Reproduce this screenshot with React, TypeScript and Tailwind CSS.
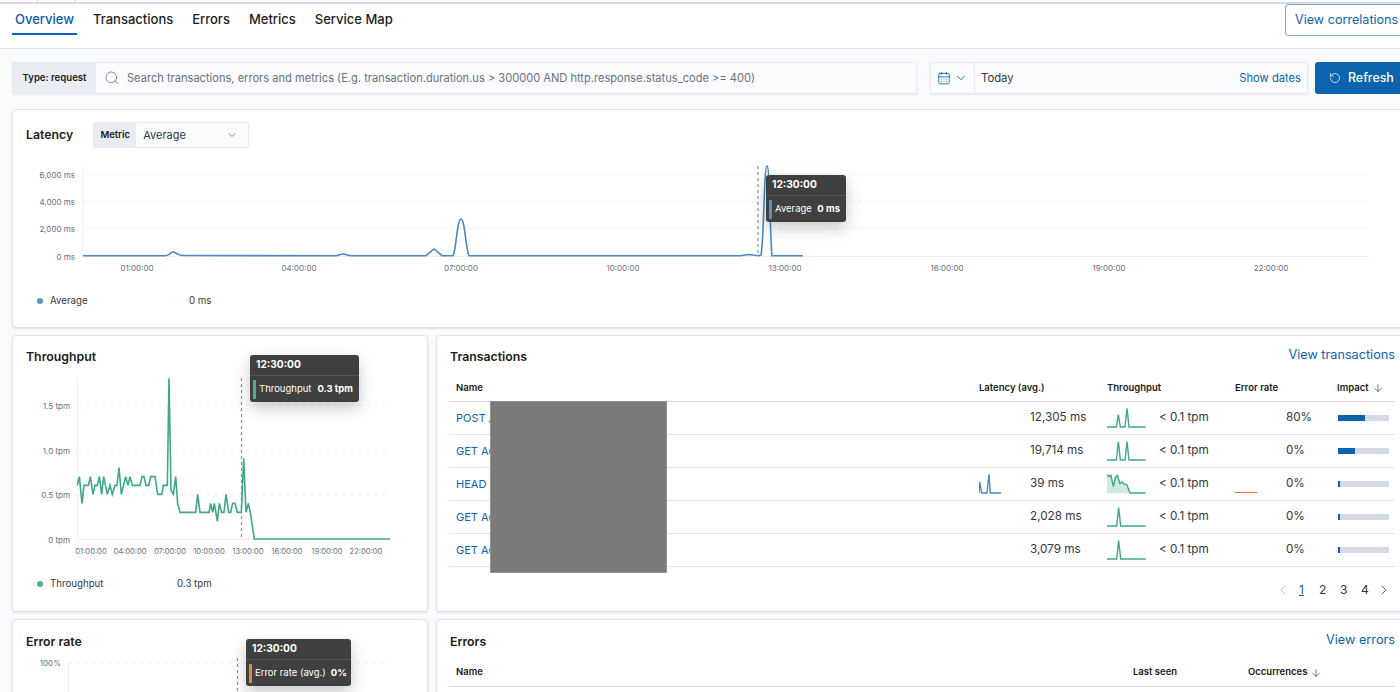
import React from "react";
import { Search, CalendarDays, ChevronDown, RotateCw, ArrowDown, ChevronLeft, ChevronRight } from "lucide-react";

const pts = (a: number[][], ox = 0, oy = 0) => a.map(([x, y]) => `${ox + x / 3},${oy + y / 3}`).join(" ");

const throughput = [[232,436],[238,410],[246,490],[252,436],[265,436],[271,410],[279,463],[285,436],[292,436],[298,410],[305,463],[311,410],[322,463],[330,436],[337,463],[345,436],[351,436],[357,383],[364,463],[377,410],[384,436],[390,410],[397,436],[420,436],[426,410],[432,410],[438,436],[446,436],[452,410],[465,410],[473,463],[485,463],[490,436],[502,436],[507,115],[513,450],[520,463],[527,410],[533,490],[540,517],[587,517],[593,463],[600,517],[627,517],[632,490],[638,517],[643,490],[652,544],[658,490],[665,517],[672,517],[678,463],[686,517],[692,517],[698,490],[705,490],[712,517],[724,517],[731,355],[738,517],[745,490],[751,517],[763,597],[1170,597]];

const latency = "M83 255.7 L165 255.7 C170 255.7 170 252 173 252 C176 252 177 255 182 255.5 L335 255.7 C339 255.5 340 254 343 254 C346 254 347 255.5 352 255.7 L426 255.7 L434 249 L442 255.7 L453 255.7 C456 252 457 219 461 219 C465 219 466 252 469 255.7 L740 255.7 L749 254.5 L758 255.7 L761 255 C764 240 764 165.7 767 165.7 C770 165.7 770 240 772 255.7 L803 255.7";

const Tooltip = ({ time, label, value, color, className }: { time: string; label: string; value: string; color: string; className: string }) => (
  <div className={`absolute z-10 h-[47px] rounded-[3px] bg-[#404040] text-white whitespace-nowrap shadow-[0_6px_16px_rgba(0,0,0,0.22)] ${className}`}>
    <div className="h-[21px] px-[6px] flex items-center text-[10.2px] font-bold border-b border-[#555]">{time}</div>
    <div className="flex items-center h-[26px] pl-[3px] pr-[6px] text-[9.5px]">
      <span className={`w-[3px] h-[19px] mr-[3px] shrink-0 ${color}`} />
      <span className="flex-1">{label}</span>
      <span className="font-bold ml-[5px]">{value}</span>
    </div>
  </div>
);

const Spark = ({ w = 39, color = "#3fa88a", d, area }: { w?: number; color?: string; d: string; area?: boolean }) => (
  <svg width={w} height={20} viewBox={`0 0 ${w * 3} 60`} className="shrink-0">
    {area && <path d={`${d} L${w * 3} 58 L0 58 Z`} fill="#cfe8e0" stroke="none" />}
    <path d={d} fill="none" stroke={color} strokeWidth={4.2} />
  </svg>
);

const rows = [
  { name: "POST /", latency: "12,305 ms", rate: "80%", impact: 27, d: "M0 57 L28 57 L34 20 L40 57 L54 57 L60 1 L66 57 L116 57" },
  { name: "GET Ad", latency: "19,714 ms", rate: "0%", impact: 17, d: "M0 57 L28 57 L34 2 L40 57 L54 57 L60 2 L66 57 L116 57" },
  { name: "HEAD /", latency: "39 ms", rate: "0%", impact: 2, d: "M0 2 L6 7 L12 4 L19 38 L25 11 L31 4 L39 29 L46 24 L52 31 L59 31 L69 57 L116 57", area: true, spark: true },
  { name: "GET Ad", latency: "2,028 ms", rate: "0%", impact: 2, d: "M0 57 L29 57 L35 2 L41 57 L116 57" },
  { name: "GET Ad", latency: "3,079 ms", rate: "0%", impact: 2, d: "M0 57 L29 57 L35 2 L41 57 L116 57" },
];

const Card = ({ className, children }: { className: string; children: React.ReactNode }) => (
  <section className={`relative bg-white border border-[#dde3ee] rounded-[4px] shadow-[0_1px_2px_rgba(152,162,179,0.3)] ${className}`}>{children}</section>
);

const H = ({ children }: { children: React.ReactNode }) => <h2 className="text-[12.3px] font-semibold text-[#1a1c21] leading-[16px]">{children}</h2>;

export default function App() {
  const font = { fontFamily: "Inter, sans-serif" };
  return (
    <div style={font} className="relative w-[1400px] h-[692px] overflow-hidden bg-[#fafbfd] text-[#343741] text-[12px]">
      <div className="w-[1420px]">
        <div className="h-[2px] bg-white flex">
          <span className="ml-[37px] w-px bg-[#d3dae6]" />
          <span className="ml-[37px] w-px bg-[#d3dae6]" />
        </div>
        <div className="h-[2px] bg-[#d3dae6]" />
        <nav className="h-[45px] bg-white border-b border-[#dfe5ef] flex justify-between pr-[12px]">
          <div className="flex pl-[12px] gap-[13px] text-[13px] font-medium text-[#1a1c21]">
            <a className="h-[31px] px-[3px] pt-[2px] flex items-center text-[#0b5cad] border-b-2 border-[#0b64b4]">Overview</a>
            <a className="h-[31px] px-[3px] flex items-center">Transactions</a>
            <a className="h-[31px] px-[3px] flex items-center">Errors</a>
            <a className="h-[31px] px-[3px] flex items-center">Metrics</a>
            <a className="h-[31px] px-[3px] flex items-center">Service Map</a>
          </div>
          <button className="w-[123px] h-[32px] border border-[#7fa8cc] rounded-[3px] text-left pl-[9px] text-[12.6px] text-[#0b64ad]">View correlations</button>
        </nav>

        <div className="flex px-[12px] pt-[13px] pb-[14px] h-[60px]">
          <div className="flex w-[905px] h-[32px] bg-[#fbfcfd] border border-[#e6eaf1] rounded-[2px] shadow-[0_1px_2px_rgba(152,162,179,0.2)]">
            <span className="w-[83px] bg-[#e9edf3] flex items-center justify-center text-[9.6px] font-semibold text-[#1a1c21]">Type: request</span>
            <Search size={16} strokeWidth={1.2} className="ml-[8px] mr-[7px] self-center text-[#69707d]" />
            <span className="self-center text-[11.1px] text-[#69707d]">Search transactions, errors and metrics (E.g. transaction.duration.us &gt; 300000 AND http.response.status_code &gt;= 400)</span>
          </div>
          <div className="ml-[13px] flex w-[378px] h-[32px] bg-[#fbfcfd] border border-[#e6eaf1] rounded-[2px] items-center shadow-[0_1px_2px_rgba(152,162,179,0.2)]">
            <span className="w-[44px] h-full flex items-center justify-center gap-[3px] border-r border-[#e6eaf1] text-[#0b64ad]">
              <CalendarDays size={14} strokeWidth={1.4} />
              <ChevronDown size={14} strokeWidth={1.5} />
            </span>
            <span className="ml-[6px] flex-1 text-[11.3px] text-[#343741]">Today</span>
            <span className="mr-[6px] text-[11.2px] text-[#0b64ad]">Show dates</span>
          </div>
          <button className="ml-[7px] w-[93px] h-[32px] bg-[#0b64ad] rounded-[3px] text-white flex items-center pl-[14px] text-[12.4px] font-medium">
            <RotateCw size={12} strokeWidth={1.5} className="mr-[7px] -scale-x-100" />
            Refresh
          </button>
        </div>

        <div className="px-[12px]">
          <Card className="h-[219px] px-[13px] pt-[12px]">
            <div className="flex items-center h-[26px]">
              <H>Latency</H>
              <div className="ml-[20px] flex h-[26px] w-[156px] border border-[#e6eaf1] rounded-[2px] bg-[#fbfcfd]">
                <span className="w-[42px] bg-[#e9edf3] flex items-center justify-center text-[9.5px] font-semibold text-[#1a1c21]">Metric</span>
                <span className="flex-1 flex items-center pl-[7px] text-[11px]">Average</span>
                <ChevronDown size={12} strokeWidth={1.2} className="self-center mr-[10px]" />
              </div>
            </div>
            <svg width={1380} height={135} viewBox="26 150 1380 135" className="block font-['Inter'] mt-[2px]">
              {[174, 201.5, 228.5].map((y) => <line key={y} x1={83} x2={1370} y1={y} y2={y} stroke="#eef0f4" strokeDasharray="4 4" />)}
              <line x1={83} x2={1370} y1={256.5} y2={256.5} stroke="#eef0f4" />
              <line x1={83} x2={83} y1={165} y2={257} stroke="#eef0f4" />
              {[["6,000 ms", 174], ["4,000 ms", 201.5], ["2,000 ms", 228.5], ["0 ms", 256]].map(([t, y]) => (
                <text key={t} x={75} y={Number(y) + 3.5} textAnchor="end" fontSize={8} fill="#69707d">{t}</text>
              ))}
              {[["01:00:00", 137], ["04:00:00", 299], ["07:00:00", 461], ["10:00:00", 623], ["13:00:00", 785], ["16:00:00", 947], ["19:00:00", 1109], ["22:00:00", 1271]].map(([t, x]) => (
                <text key={t} x={x} y={271} textAnchor="middle" fontSize={8} fill="#69707d">{t}</text>
              ))}
              <line x1={758} x2={758} y1={166} y2={256} stroke="#8d939e" strokeWidth={1.2} strokeDasharray="3 3" />
              <path d={latency} fill="none" stroke="#4a88bf" strokeWidth={1.6} />
            </svg>
            <div className="flex items-center text-[9.7px] mt-[9px]">
              <span className="w-[6px] h-[6px] ml-[11px] rounded-full bg-[#5a93c5]" />
              <span className="ml-[7px] w-[139px]">Average</span>
              <span>0 ms</span>
            </div>
            <Tooltip time="12:30:00" label="Average" value="0 ms" color="bg-[#5a8fc0]" className="left-[753px] top-[65px] w-[80px]" />
          </Card>

          <div className="grid grid-cols-[416px_1fr] gap-[8px] mt-[7px]">
            <div className="flex flex-col gap-[7px]">
              <Card className="h-[277px] px-[13px] pt-[13px]">
                <H>Throughput</H>
                <svg width={400} height={190} viewBox="26 373 400 190" className="block font-['Inter'] mt-[8px]">
                  {[405, 450, 494].map((y) => <line key={y} x1={78} x2={388} y1={y} y2={y} stroke="#eef0f4" strokeDasharray="4 4" />)}
                  <line x1={78} x2={388} y1={539.5} y2={539.5} stroke="#eef0f4" />
                  <line x1={77.5} x2={77.5} y1={378} y2={539} stroke="#eef0f4" />
                  {[["1.5 tpm", 405], ["1.0 tpm", 450], ["0.5 tpm", 494], ["0 tpm", 539]].map(([t, y]) => (
                    <text key={t} x={70} y={Number(y) + 3.5} textAnchor="end" fontSize={8} fill="#69707d">{t}</text>
                  ))}
                  {[["01:00:00", 91], ["04:00:00", 130], ["07:00:00", 170], ["10:00:00", 209], ["13:00:00", 248], ["16:00:00", 287], ["19:00:00", 327], ["22:00:00", 366]].map(([t, x]) => (
                    <text key={t} x={x} y={554} textAnchor="middle" fontSize={7.6} fill="#69707d">{t}</text>
                  ))}
                  <line x1={241.5} x2={241.5} y1={378} y2={539} stroke="#8d939e" strokeWidth={1.2} strokeDasharray="3 3" />
                  <polyline points={pts(throughput, 0, 340)} fill="none" stroke="#3fa88a" strokeWidth={1.6} />
                </svg>
                <div className="flex items-center text-[9.7px] mt-[14px]">
                  <span className="w-[6px] h-[6px] ml-[11px] rounded-full bg-[#4bb090]" />
                  <span className="ml-[7px] w-[127px]">Throughput</span>
                  <span>0.3 tpm</span>
                </div>
                <Tooltip time="12:30:00" label="Throughput" value="0.3 tpm" color="bg-[#4bb090]" className="left-[237px] top-[19px] w-[109px]" />
              </Card>
              <Card className="h-[120px] px-[13px] pt-[14px]">
                <H>Error rate</H>
                <svg width={400} height={40} viewBox="26 655 400 40" className="block font-['Inter'] mt-[5px]">
                  <line x1={68} x2={390} y1={663} y2={663} stroke="#eef0f4" strokeDasharray="4 4" />
                  <line x1={68.5} x2={68.5} y1={663} y2={695} stroke="#eef0f4" />
                  <text x={61} y={666} textAnchor="end" fontSize={8} fill="#69707d">100%</text>
                  <line x1={237.5} x2={237.5} y1={658} y2={695} stroke="#8d939e" strokeWidth={1.2} strokeDasharray="3 3" />
                </svg>
                <Tooltip time="12:30:00" label="Error rate (avg.)" value="0%" color="bg-[#e08b3d]" className="left-[233px] top-[19px] w-[105px]" />
              </Card>
            </div>

            <div className="flex flex-col gap-[7px]">
              <Card className="h-[277px] pl-[12px] pt-[13px]">
                <div className="flex justify-between w-[946px] pl-[1px]">
                  <H>Transactions</H>
                  <a className="text-[12.7px] leading-[11px] text-[#0b64ad]">View transactions</a>
                </div>
                <div className="w-[946px] mt-[9px]">
                  <div className="flex items-center h-[28px] pt-[1px] text-[9.5px] font-semibold text-[#1a1c21] border-b border-[#d3dae6]">
                    <span className="w-[530px] pl-[7px]">Name</span>
                    <span className="w-[128px]">Latency (avg.)</span>
                    <span className="w-[128px]">Throughput</span>
                    <span className="w-[102px]">Error rate</span>
                    <span className="flex items-center">Impact<ArrowDown size={12} strokeWidth={1.2} className="ml-[3px]" /></span>
                  </div>
                  {rows.map((r, i) => (
                    <div key={i} className="flex items-center h-[33px] text-[11.7px] border-b border-[#dfe5ef]">
                      <a className="w-[530px] pl-[7px] pt-[1px] text-[11px] text-[#0b64ad]">{r.name}</a>
                      <span className="w-[128px] flex items-center">
                        <span className="w-[51px] h-[20px]">
                          {r.spark && <Spark w={22} color="#4a88bf" d="M0 57 L2 24 L8 57 L24 57 L30 2 L34 57 L66 57" />}
                        </span>
                        {r.latency}
                      </span>
                      <span className="w-[128px] flex items-center">
                        <Spark d={r.d} area={r.area} />
                        <span className="ml-[13px]">&lt; 0.1 tpm</span>
                      </span>
                      <span className="w-[102px] flex items-center">
                        <span className="w-[51px] h-[20px] flex items-end">
                          {r.spark && <span className="w-[22px] h-px mb-[1px] bg-[#e0703a]" />}
                        </span>
                        {r.rate}
                      </span>
                      <span className="ml-[1px] w-[51px] h-[6px] bg-[#d3dae6] block">
                        <span className="block h-full bg-[#0b64ad]" style={{ width: r.impact }} />
                      </span>
                    </div>
                  ))}
                  <div className="flex items-center mt-[14px] text-[12px] h-[18px] relative text-[#343741]">
                    <ChevronLeft size={16} strokeWidth={1.1} className="ml-[826px] text-[#a9afba]" />
                    <span className="ml-[8px] w-[20px] text-[#0b64ad] underline">1</span>
                    <span className="w-[21px]">2</span>
                    <span className="w-[21px]">3</span>
                    <span className="w-[15px]">4</span>
                    <ChevronRight size={16} strokeWidth={1.1} />
                  </div>
                </div>
              </Card>
              <Card className="h-[120px] pl-[12px] pt-[14px]">
                <div className="flex justify-between w-[946px] pl-[1px]">
                  <H>Errors</H>
                  <a className="text-[12.7px] leading-[11px] text-[#0b64ad]">View errors</a>
                </div>
                <div className="w-[946px] mt-[8px] flex items-center h-[29px] pt-[1px] text-[9.5px] font-semibold text-[#1a1c21] border-b border-[#d3dae6]">
                  <span className="w-[684px] pl-[7px]">Name</span>
                  <span className="w-[115px]">Last seen</span>
                  <span className="flex items-center">Occurrences<ArrowDown size={12} strokeWidth={1.2} className="ml-[3px]" /></span>
                </div>
              </Card>
            </div>
          </div>
        </div>
      </div>
      <div className="absolute left-[490px] top-[401px] w-[177px] h-[172px] bg-[#7b7b7b] border border-[#939393]" />
    </div>
  );
}
